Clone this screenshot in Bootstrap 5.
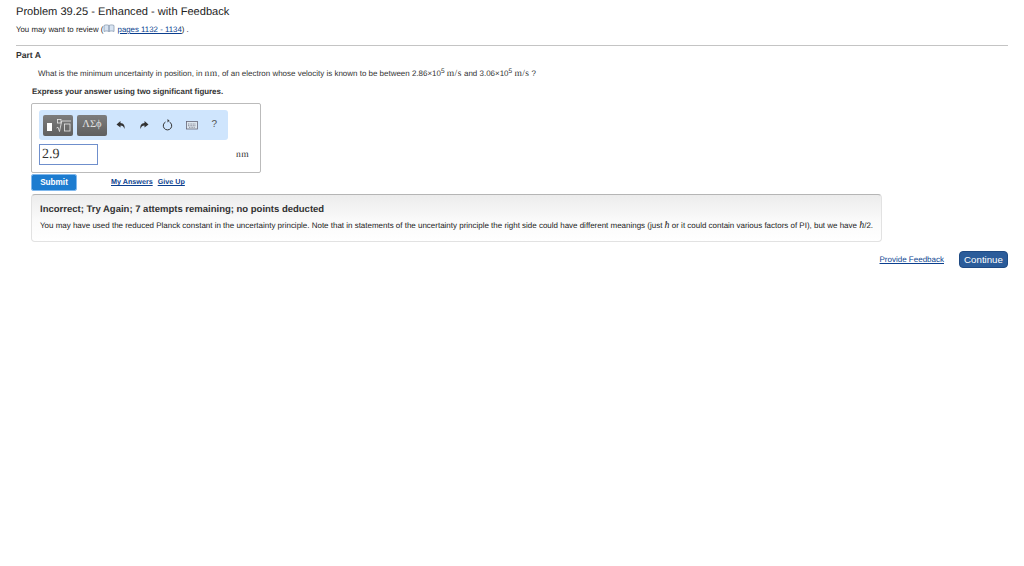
<!DOCTYPE html>
<html lang="en">
<head>
  <meta charset="UTF-8">
  <title>Problem 39.25</title>
  <link href="https://cdn.jsdelivr.net/npm/bootstrap@5.3.1/dist/css/bootstrap.min.css" rel="stylesheet">
  <style>
    body {
      background-color: #fff;
      font-family: "Liberation Sans", Arial, sans-serif;
      color: #222;
      font-size: 8px;
      line-height: 10px;
      text-rendering: geometricPrecision;
    }
    a { color: #0b3f8f; font-weight: 400; }
    sup { font-size: 6.5px; top: -3px; }
    .page-wrap { padding: 5px 16px 0; }
    .prob-title { font-size: 11.1px; line-height: 14px; font-weight: 400; margin: 0 0 5px; color: #222; }
    .review-line { font-size: 7.85px; line-height: 12px; margin-bottom: 9px; }
    .part-rule { border-top: 1px solid #c4c4c4; margin-bottom: 4px; }
    .part-title { font-size: 8.6px; line-height: 11px; font-weight: 700; margin: 0 0 7px; color: #333; }
    .question { font-size: 7.98px; line-height: 11px; margin: 0 0 6px 22px; color: #333; }
    .instruct { font-size: 7.92px; line-height: 11px; font-weight: 700; margin: 0 0 6px 16px; color: #333; }
    .math { font-family: "Liberation Serif", serif; font-size: 9.5px; letter-spacing: .4px; }
    .hbar { font-family: "Liberation Serif", serif; font-size: 10px; font-style: italic; }
    .answer-box { width: 230px; height: 70px; margin-left: 15px; border: 1px solid #bbb; border-radius: 2px; padding: 6px 7px; }
    .tool-bar { width: 189px; height: 30px; background: #cfe5fd; border-radius: 3px; padding: 4px; }
    .tpl-btn { height: 21px; background: linear-gradient(#7d7d7d, #5f5f5f); border-radius: 2px; color: #e4e4e4; }
    .tpl-one { width: 30px; }
    .tpl-two { width: 30px; font-family: "Liberation Serif", serif; font-size: 10.5px; }
    .tool-icons { width: 101px; margin-left: 5px; }
    .help-q { font-size: 10px; color: #555; }
    .ans-input { width: 59px; height: 21px; border: 1px solid #6f8fcc; padding: 0 2px; font-family: "Liberation Serif", serif; font-size: 14px; line-height: 19px; color: #333; }
    .unit-txt { font-family: "Liberation Serif", serif; font-size: 9.5px; letter-spacing: .4px; color: #333; }
    .row-submit { margin: 0 0 0 16px; height: 18px; }
    .btn-submit { width: 44px; height: 15px; background: #1c7cd0; color: #fff; font-size: 8.2px; font-weight: 700; border: 0; outline: 1px solid #7fb8ee; border-radius: 1px; padding: 0; line-height: 15px; }
    .sub-links { margin-left: 35px; gap: 5px; font-size: 7.2px; }
    .sub-links a { font-weight: 700; }
    .feedback-box { width: 851px; height: 48px; margin: 3px 0 0 15px; border: 1px solid #e2e2e2; border-top-color: #b5b5b5; border-radius: 4px; background: linear-gradient(#ececec, #fafafa 55%, #fff); padding: 9px 8px; }
    .fb-head { font-size: 9.5px; line-height: 11px; font-weight: 700; margin: 0 0 5px; color: #333; }
    .fb-text { font-size: 7.97px; line-height: 11px; margin: 0; color: #222; white-space: nowrap; }
    .foot-row { margin-top: 9px; gap: 15px; }
    .foot-row a { font-size: 8px; }
    .btn-continue { width: 49px; height: 17px; background: #2b5c9a; border: 1px solid #1f4a83; border-radius: 4px; color: #fff; font-size: 9.7px; line-height: 14px; padding: 0; }
  </style>
</head>
<body>
  <div class="page-wrap">
    <h1 class="prob-title">Problem 39.25 - Enhanced - with Feedback</h1>
    <div class="review-line">You may want to review (<svg width="12" height="8" viewBox="0 0 12 8" class="align-baseline"><path d="M1 1.500c1.500-.8 3.500-.8 5 0v6C4.500 6.800 2.500 6.800 1 7.500zM6 1.500c1.500-.8 3.500-.8 5 0v6c-1.500-.7-3.500-.7-5 0z" fill="#d8e4f2" stroke="#8a9bb0" stroke-width=".8"/></svg> <a href="#">pages 1132 - 1134</a>) .</div>
    <div class="part-rule"></div>
    <h2 class="part-title">Part A</h2>
    <p class="question">What is the minimum uncertainty in position, in <span class="math">nm</span>, of an electron whose velocity is known to be between 2.86×10<sup>5</sup> <span class="math">m/s</span> and 3.06×10<sup>5</sup> <span class="math">m/s</span> ?</p>
    <p class="instruct">Express your answer using two significant figures.</p>

    <div class="answer-box">
      <div class="tool-bar d-flex align-items-center gap-1">
        <div class="tpl-btn tpl-one">
          <svg width="30" height="21" viewBox="0 0 30 21" class="d-block"><rect x="4" y="8" width="5" height="8" fill="#fff"/><rect x="14.500" y="4.500" width="3.500" height="3.500" fill="none" stroke="#e8e8e8" stroke-width=".8"/><path d="M13.500 13l1.500-.8 1.500 4.300 2.200-10.500h9.300" fill="none" stroke="#e8e8e8" stroke-width=".8"/><rect x="21.500" y="9" width="5.500" height="7" fill="none" stroke="#e8e8e8" stroke-width=".8"/></svg>
        </div>
        <div class="tpl-btn tpl-two d-flex align-items-center justify-content-center">ΛΣϕ</div>
        <div class="tool-icons d-flex align-items-center justify-content-between">
          <svg width="10" height="10" viewBox="0 0 10 10"><path d="M4.500 1L.5 4.500 4.500 7.500V5.500C6.500 5.500 7.800 6.500 8.500 9 9.200 5.500 7.500 3.200 4.500 3z" fill="#333"/></svg>
          <svg width="10" height="10" viewBox="0 0 10 10"><path d="M5.500 1L9.500 4.500 5.500 7.500V5.500C3.500 5.500 2.200 6.500 1.500 9 .8 5.500 2.500 3.200 5.500 3z" fill="#333"/></svg>
          <svg width="11" height="12" viewBox="0 0 11 12"><path d="M3.500 3A4.200 4.200 0 1 0 7.500 3" fill="none" stroke="#333" stroke-width="1"/><path d="M5.500 0v3.500L7.500 1.800z" fill="#333"/></svg>
          <svg width="12" height="9" viewBox="0 0 12 9"><rect x=".5" y=".5" width="11" height="7.500" fill="#dde6ee" stroke="#667" stroke-width=".8"/><path d="M2 3h8M2 4.700h8M3 6.300h6" stroke="#667" stroke-width=".7" stroke-dasharray="1 .6"/></svg>
          <span class="help-q">?</span>
        </div>
      </div>
      <div class="d-flex justify-content-between align-items-center mt-1">
        <div class="ans-input">2.9</div>
        <span class="unit-txt me-1">nm</span>
      </div>
    </div>

    <div class="row-submit d-flex align-items-center">
      <button type="button" class="btn btn-submit">Submit</button>
      <div class="sub-links d-flex"><a href="#">My Answers</a><a href="#">Give Up</a></div>
    </div>

    <div class="feedback-box">
      <p class="fb-head">Incorrect; Try Again; 7 attempts remaining; no points deducted</p>
      <p class="fb-text">You may have used the reduced Planck constant in the uncertainty principle. Note that in statements of the uncertainty principle the right side could have different meanings (just <span class="hbar">ħ</span> or it could contain various factors of PI), but we have <span class="hbar">ħ</span>/2.</p>
    </div>

    <div class="foot-row d-flex justify-content-end align-items-center">
      <a href="#">Provide Feedback</a>
      <button type="button" class="btn btn-continue">Continue</button>
    </div>
  </div>
  <script src="https://cdn.jsdelivr.net/npm/bootstrap@5.3.1/dist/js/bootstrap.bundle.min.js"></script>
</body>
</html>
